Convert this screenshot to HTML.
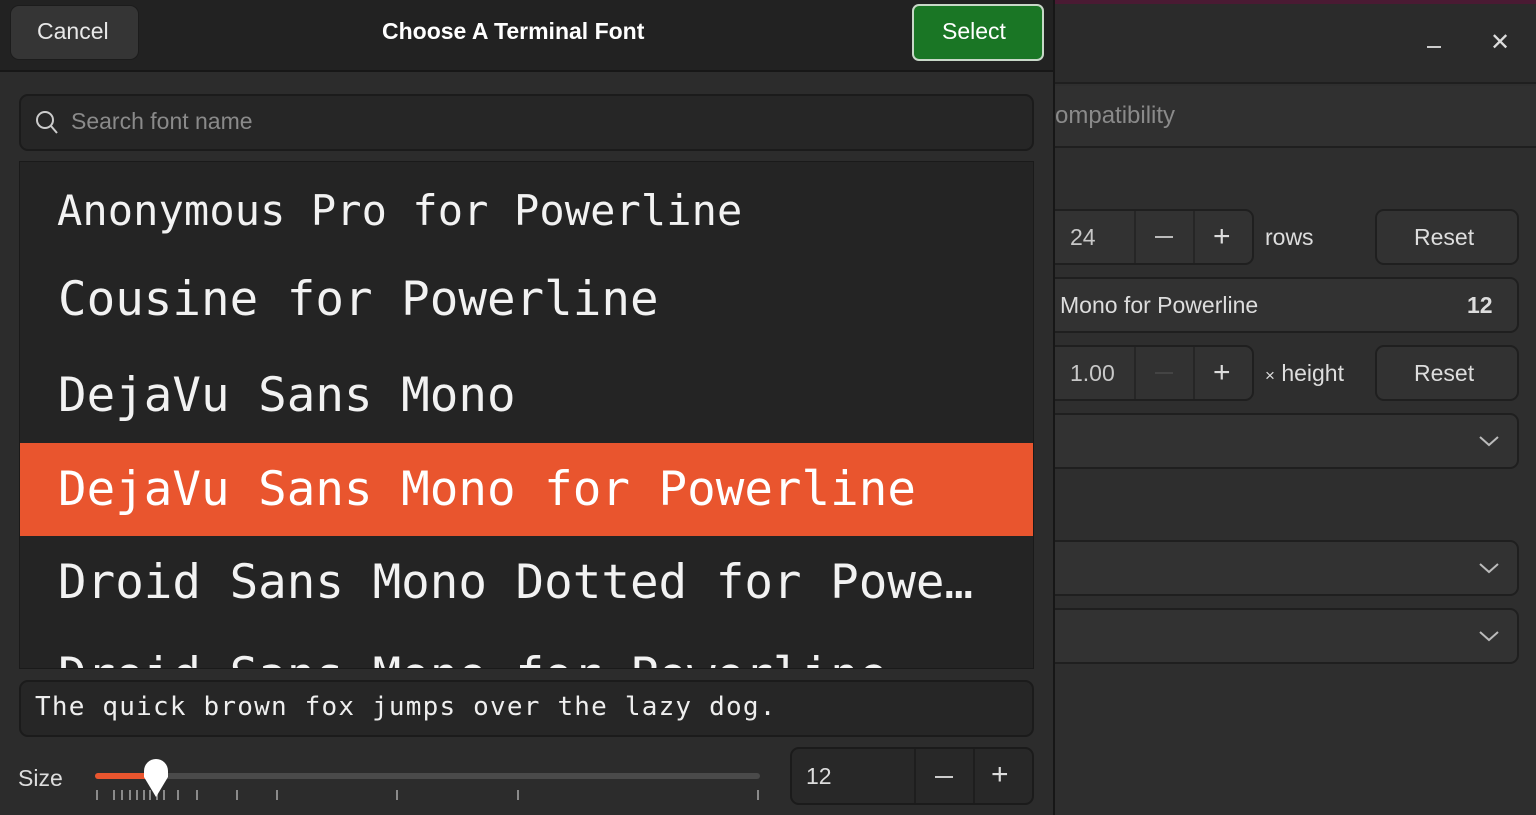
<!DOCTYPE html><html><head><style>
*{box-sizing:border-box;margin:0;padding:0}
body{width:1536px;height:815px;overflow:hidden;background:#2e2e2e;font-family:"Liberation Sans",sans-serif;position:relative;color:#eee}
.a{position:absolute}
.ctl{position:absolute;background:#323232;border:2px solid #1f1f1f;border-radius:9px}
.mono{font-family:"DejaVu Sans Mono",monospace}
.item{position:absolute;left:0;width:1013px;height:93px;font-size:44px;line-height:93px;padding-left:38px;color:#f2f2f2;white-space:nowrap;overflow:hidden}
</style></head><body>
<!-- right window -->
<div class="a" style="left:1055px;top:0;width:481px;height:4px;background:#4a1a33"></div>
<div class="a" style="left:1055px;top:4px;width:481px;height:80px;background:#2b2b2b;border-bottom:2px solid #1f1f1f"></div>
<div class="a" style="left:1427px;top:46px;width:14px;height:2px;background:#ccc"></div>
<div class="a" style="left:1490px;top:28px;font-size:24px;color:#ddd">✕</div>
<div class="a" style="left:1055px;top:86px;width:481px;height:62px;background:#303030;border-bottom:2px solid #1f1f1f"></div>
<div class="a" style="left:1055px;top:102px;font-size:24px;color:#8a8a8a">ompatibility</div>
<div class="ctl" style="left:1040px;top:209px;width:214px;height:56px"></div>
<div class="a" style="left:1134px;top:211px;width:2px;height:52px;background:#262626"></div>
<div class="a" style="left:1193px;top:211px;width:2px;height:52px;background:#262626"></div>
<div class="a" style="left:1070px;top:224px;font-size:23px;color:#c8c8c8">24</div>
<div class="a" style="left:1155px;top:236px;width:18px;height:2px;background:#bbb"></div>
<div class="a" style="left:1213px;top:222px;font-size:30px;color:#ddd;line-height:30px">+</div>
<div class="a" style="left:1265px;top:224px;font-size:23px;color:#ddd">rows</div>
<div class="ctl" style="left:1375px;top:209px;width:144px;height:56px"></div>
<div class="a" style="left:1414px;top:224px;font-size:23px;color:#ddd">Reset</div>
<div class="ctl" style="left:1040px;top:277px;width:479px;height:56px"></div>
<div class="a" style="left:1060px;top:292px;font-size:23px;color:#ddd">Mono for Powerline</div>
<div class="a" style="left:1467px;top:292px;font-size:23px;color:#ddd;font-weight:bold">12</div>
<div class="ctl" style="left:1040px;top:345px;width:214px;height:56px"></div>
<div class="a" style="left:1134px;top:347px;width:2px;height:52px;background:#262626"></div>
<div class="a" style="left:1193px;top:347px;width:2px;height:52px;background:#262626"></div>
<div class="a" style="left:1070px;top:360px;font-size:23px;color:#c8c8c8">1.00</div>
<div class="a" style="left:1155px;top:372px;width:18px;height:2px;background:#444"></div>
<div class="a" style="left:1213px;top:358px;font-size:30px;color:#ddd;line-height:30px">+</div>
<div class="a" style="left:1265px;top:360px;font-size:23px;color:#ddd"><span style="font-size:17px">×</span> height</div>
<div class="ctl" style="left:1375px;top:345px;width:144px;height:56px"></div>
<div class="a" style="left:1414px;top:360px;font-size:23px;color:#ddd">Reset</div>
<div class="ctl" style="left:1040px;top:413px;width:479px;height:56px"></div>
<div class="ctl" style="left:1040px;top:540px;width:479px;height:56px"></div>
<div class="ctl" style="left:1040px;top:608px;width:479px;height:56px"></div>
<svg class="a" style="left:1478px;top:434px" width="22" height="240"><g fill="none" stroke="#bbb" stroke-width="2"><path d="M2 3l9 8 9-8M2 130l9 8 9-8M2 198l9 8 9-8"/></g></svg>
<!-- dialog -->
<div class="a" style="left:0;top:0;width:1055px;height:815px;background:#2c2c2c;border-right:2px solid #171717"></div>
<div class="a" style="left:0;top:0;width:1053px;height:72px;background:#222;border-bottom:2px solid #171717"></div>
<div class="a" style="left:10px;top:5px;width:129px;height:55px;background:#353535;border-radius:9px;border:1px solid #1c1c1c"></div>
<div class="a" style="left:37px;top:18px;font-size:23px;color:#e8e8e8">Cancel</div>
<div class="a" style="left:382px;top:18px;font-size:23px;font-weight:bold;color:#fff">Choose A Terminal Font</div>
<div class="a" style="left:912px;top:4px;width:132px;height:57px;background:#1a7625;border-radius:7px;border:2px solid #c8d8c8"></div>
<div class="a" style="left:942px;top:18px;font-size:23px;color:#fff">Select</div>
<div class="a" style="left:19px;top:94px;width:1015px;height:57px;background:#262626;border:2px solid #1b1b1b;border-radius:9px"></div>
<svg class="a" style="left:35px;top:110px" width="26" height="26"><circle cx="10" cy="10" r="8" fill="none" stroke="#ccc" stroke-width="2"/><path d="M16 16l6 7" stroke="#ccc" stroke-width="2"/></svg>
<div class="a" style="left:71px;top:108px;font-size:23px;color:#8a8a8a">Search font name</div>
<div class="a" style="left:19px;top:161px;width:1015px;height:508px;background:#242424;border:1px solid #1a1a1a;overflow:hidden">
<div style="position:absolute;left:0;top:0;width:1013px;height:506px">
<div class="item mono" style="top:2px;font-size:42px;letter-spacing:0.1px;padding-left:37px">Anonymous Pro for Powerline</div>
<div class="item mono" style="top:91px;font-size:47.5px">Cousine for Powerline</div>
<div class="item mono" style="top:187px;font-size:47.5px">DejaVu Sans Mono</div>
<div class="item mono" style="top:281px;font-size:47.5px;background:#e9552e;color:#fff">DejaVu Sans Mono for Powerline</div>
<div class="item mono" style="top:374px;font-size:47.5px">Droid Sans Mono Dotted for Powe…</div>
<div class="item mono" style="top:467px;font-size:47.5px">Droid Sans Mono for Powerline</div>
</div></div>
<div class="a" style="left:19px;top:680px;width:1015px;height:57px;background:#262626;border:2px solid #1b1b1b;border-radius:9px"></div>
<div class="a mono" style="left:35px;top:692px;font-size:26px;letter-spacing:1.2px;color:#eee">The quick brown fox jumps over the lazy dog.</div>
<div class="a" style="left:18px;top:765px;font-size:23px;color:#ddd">Size</div>
<div class="a" style="left:95px;top:773px;width:665px;height:6px;background:#4a4a4a;border-radius:3px"></div>
<div class="a" style="left:95px;top:773px;width:60px;height:6px;background:#e9552e;border-radius:3px"></div>
<svg class="a" style="left:90px;top:755px" width="680" height="50"><g stroke="#aaa" stroke-width="1.5"><path d="M7 35v10M24 35v10M32 35v10M40 35v10M47 35v10M54 35v10M60 35v10M67 35v10M74 35v10M88 35v10M107 35v10M147 35v10M187 35v10M307 35v10M428 35v10M668 35v10"/></g><path d="M66 4a12 12 0 0 1 12 12v6l-12 20-12-20v-6a12 12 0 0 1 12-12z" fill="#fff"/></svg>
<div class="a" style="left:790px;top:747px;width:244px;height:58px;background:#282828;border:2px solid #1b1b1b;border-radius:9px"></div>
<div class="a" style="left:914px;top:749px;width:2px;height:54px;background:#1e1e1e"></div>
<div class="a" style="left:973px;top:749px;width:2px;height:54px;background:#1e1e1e"></div>
<div class="a" style="left:806px;top:763px;font-size:23px;color:#ddd">12</div>
<div class="a" style="left:935px;top:776px;width:18px;height:2px;background:#ccc"></div>
<div class="a" style="left:991px;top:760px;font-size:30px;color:#ddd;line-height:30px">+</div>
</body></html>
